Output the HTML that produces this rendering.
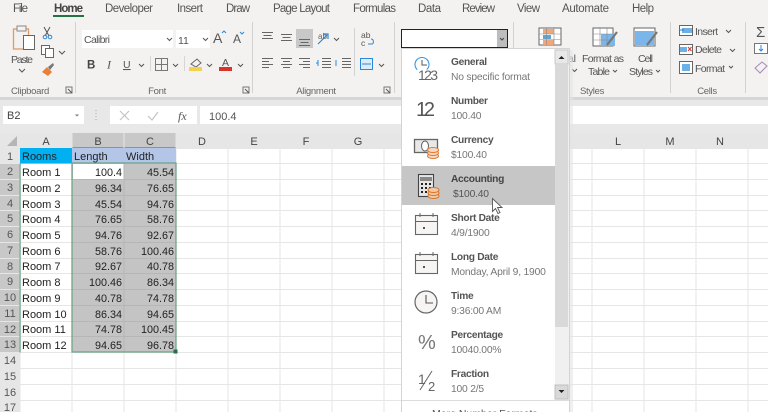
<!DOCTYPE html>
<html><head><meta charset="utf-8"><title>Excel number format</title>
<style>
html,body{margin:0;padding:0;background:#fff;width:768px;height:412px;overflow:hidden}
svg{display:block;filter:blur(.35px)}
text{font-family:"Liberation Sans",sans-serif;white-space:pre}
.tab{font-size:11.5px;fill:#555}
.rb{font-size:10.5px;fill:#555}
.gl{font-size:9.5px;fill:#666;text-anchor:middle;letter-spacing:-.3px}
.ch{font-size:11px;fill:#444;text-anchor:middle}
.rh{font-size:11px;fill:#555;text-anchor:middle}
.c{font-size:11px;fill:#222}
.n{font-size:10.8px;fill:#222;text-anchor:end}
.ti{font-size:10.2px;font-weight:bold;fill:#555;letter-spacing:-.3px}
.su{font-size:10.3px;fill:#777;letter-spacing:-.2px}
.ln{stroke:#666;fill:none}
.chev{fill:none;stroke:#555;stroke-width:1}
</style></head><body>
<svg width="768" height="412" viewBox="0 0 768 412" xmlns="http://www.w3.org/2000/svg">
<!-- ribbon -->
<rect width="768" height="97" fill="#f3f2f1"/>
<rect y="97" width="768" height="3" fill="#d6d6d6"/>
<rect y="100" width="768" height="33" fill="#e8e8e8"/>
<!-- tabs -->
<text class="tab" x="13" y="12" textLength="15">File</text>
<text class="tab" x="54" y="12" textLength="29" style="font-weight:bold;fill:#444">Home</text>
<rect x="53" y="15" width="31" height="2" fill="#217346"/>
<text class="tab" x="105" y="12" textLength="48">Developer</text>
<text class="tab" x="177" y="12" textLength="26">Insert</text>
<text class="tab" x="226" y="12" textLength="24">Draw</text>
<text class="tab" x="273" y="12" textLength="57">Page Layout</text>
<text class="tab" x="353" y="12" textLength="43">Formulas</text>
<text class="tab" x="418" y="12" textLength="23">Data</text>
<text class="tab" x="462" y="12" textLength="33">Review</text>
<text class="tab" x="517" y="12" textLength="23">View</text>
<text class="tab" x="562" y="12" textLength="47">Automate</text>
<text class="tab" x="632" y="12" textLength="22">Help</text>
<!-- separators -->
<g fill="#d2d2d2">
<rect x="75" y="22" width="1" height="71"/><rect x="252" y="22" width="1" height="71"/>
<rect x="354" y="28" width="1" height="48"/><rect x="394" y="22" width="1" height="71"/>
<rect x="513" y="22" width="1" height="71"/><rect x="670" y="22" width="1" height="71"/>
<rect x="745" y="22" width="1" height="71"/>
</g>
<!-- clipboard -->
<rect x="13.500" y="29" width="15" height="20" fill="none" stroke="#e39a5f" stroke-width="1.300"/>
<rect x="17" y="26" width="9" height="5" fill="#f3f2f1" stroke="#888"/>
<rect x="23.500" y="35.500" width="11" height="14" fill="#fff" stroke="#666"/>
<text class="rb" x="11" y="63" textLength="22">Paste</text>
<path class="chev" d="M19 69l3 3 3-3"/>
<path d="M44 27l5 9M50 27l-5 9" stroke="#555" fill="none"/>
<circle cx="45" cy="37" r="1.800" fill="none" stroke="#2b88d8"/><circle cx="50" cy="37" r="1.800" fill="none" stroke="#2b88d8"/>
<rect x="41.500" y="45.500" width="8" height="9" fill="#fff" stroke="#666"/><rect x="45.500" y="48.500" width="8" height="9" fill="#fff" stroke="#666"/>
<path class="chev" d="M59 51l3 3 3-3"/>
<path d="M42 72l5-5 5 5-4 4z" fill="#e8803a"/><path d="M48 67l5-4 1 2-4 5z" fill="#777"/>
<text class="gl" x="30" y="94">Clipboard</text>
<rect x="66" y="87" width="6" height="6" fill="none" stroke="#777"/><path d="M68 89l4 4" stroke="#555"/>
<!-- font -->
<rect x="82" y="30" width="91" height="18" fill="#fff"/>
<text x="84" y="43" textLength="26" style="font-size:10.5px;fill:#555">Calibri</text>
<path class="chev" d="M167 38l2.500 2.500 2.500-2.500"/>
<rect x="176" y="30" width="34" height="18" fill="#fff"/>
<text x="178" y="44" style="font-size:10.5px;fill:#555">11</text>
<path class="chev" d="M203 38l2.500 2.500 2.500-2.500"/>
<text x="213" y="43" style="font-size:14px;fill:#555">A</text><path d="M222 33l2-2 2 2" stroke="#2b88d8" fill="none"/>
<text x="233" y="43" style="font-size:12px;fill:#555">A</text><path d="M240 32l2 2 2-2" stroke="#2b88d8" fill="none"/>
<text x="87" y="68.500" style="font-size:11.5px;font-weight:bold;fill:#444">B</text>
<text x="107" y="68.500" style="font-size:12px;font-style:italic;font-family:'Liberation Serif',serif;fill:#555">I</text>
<text x="123" y="68" style="font-size:10.5px;fill:#555;text-decoration:underline">U</text>
<path class="chev" d="M139 64l2.500 2.500 2.500-2.500"/>
<rect x="150" y="56" width="1" height="15" fill="#d5d5d5"/>
<path d="M155.500 58.500h12v12h-12zM161.500 58.500v12M155.500 64.500h12" fill="none" stroke="#777"/>
<path class="chev" d="M173 64l2.500 2.500 2.500-2.500"/>
<rect x="184" y="56" width="1" height="15" fill="#d5d5d5"/>
<path d="M191 64l6-5 4 4-5 4z" fill="none" stroke="#666"/><rect x="189" y="67" width="13" height="4" fill="#f3d250"/>
<path class="chev" d="M207 64l2.500 2.500 2.500-2.500"/>
<text x="222" y="66" style="font-size:10.5px;fill:#555">A</text><rect x="219" y="67" width="13" height="4" fill="#d9342b"/>
<path class="chev" d="M238 64l2.500 2.500 2.500-2.500"/>
<text class="gl" x="157" y="94">Font</text>
<rect x="243" y="87" width="6" height="6" fill="none" stroke="#777"/><path d="M245 89l4 4" stroke="#555"/>
<!-- alignment -->
<rect x="296" y="29" width="17" height="19" fill="#c8c8c8"/>
<g stroke="#666" fill="none">
<path d="M262 32.500h11M263.500 35.500h8M262 38.500h11M281 34.500h11M282.500 37.500h8M281 40.500h11M299 39.500h11M300.500 42.500h8M299 45.500h11"/>
<path d="M262 58.500h11M262 61.500h7M262 64.500h11M262 67.500h7M281 58.500h11M283 61.500h7M281 64.500h11M283 67.500h7M299 58.500h11M303 61.500h7M299 64.500h11M303 67.500h7M322 58.500h9M322 61.500h9M322 64.500h9M322 67.500h9M342 58.500h9M342 61.500h9M342 64.500h9M342 67.500h9"/>
</g>
<path d="M318 60v6M318 63h-2M336 60v6" stroke="#2b88d8" fill="none"/>
<path d="M318 44l9-9M323 34h5v5" stroke="#2b88d8" fill="none" stroke-width="1.200"/>
<text x="318" y="39" style="font-size:8px;fill:#666">ab</text>
<path class="chev" d="M334 38l2.500 2.500 2.500-2.500"/>
<text x="361" y="38" style="font-size:8.500px;fill:#555">ab</text><text x="361" y="46" style="font-size:8.500px;fill:#555">c</text>
<path d="M368 44h4c2 0 2-5-1-5" stroke="#2b88d8" fill="none"/>
<rect x="360.500" y="58.500" width="12" height="11" fill="#dcecf8" stroke="#2b88d8"/><path d="M362 64h9" stroke="#2b88d8"/>
<path class="chev" d="M379 64l2.500 2.500 2.500-2.500"/>
<text class="gl" x="316" y="94">Alignment</text>
<rect x="384" y="87" width="6" height="6" fill="none" stroke="#777"/><path d="M386 89l4 4" stroke="#555"/>
<!-- styles -->
<g transform="translate(539,28)">
<rect x="0" y="0" width="22" height="17" fill="#fff" stroke="#666"/>
<rect x="4" y="1" width="11" height="5" fill="#f0a878"/><rect x="4" y="7" width="8" height="4" fill="#5ba6e0"/><rect x="4" y="12" width="11" height="5" fill="#f0a878"/>
<path d="M0 6h22M0 11.500h22M7.500 0v17M15 0v17" stroke="#888" fill="none" stroke-width=".6"/>
</g>
<g transform="translate(593,28)">
<rect x="0" y="0" width="20" height="18" fill="#fff" stroke="#666"/><rect x="8" y="6" width="14" height="12" fill="#7ab6ea"/>
<path d="M0 6h20M0 12h20M7 0v18M14 0v18" stroke="#888" fill="none" stroke-width=".6"/>
<path d="M14 17l10-13" stroke="#777" stroke-width="2.200"/>
</g>
<g transform="translate(634,28)">
<rect x="0" y="0" width="21" height="18" fill="#fff" stroke="#666"/><rect x="1" y="3" width="19" height="14" fill="#7ab6ea"/>
<path d="M13 17l10-13" stroke="#777" stroke-width="2.200"/>
</g>
<text class="rb" x="568" y="62" textLength="8">al</text>
<text class="rb" x="582" y="62" textLength="42">Format as</text>
<text class="rb" x="588" y="75" textLength="22">Table</text><path class="chev" d="M613 70l2 2 2-2"/>
<text class="rb" x="638" y="62" textLength="15">Cell</text>
<text class="rb" x="629" y="75" textLength="24">Styles</text><path class="chev" d="M656 70l2 2 2-2"/>
<path class="chev" d="M572 69l2.500 2.500 2.500-2.500"/>
<text class="gl" x="592" y="94">Styles</text>
<!-- cells -->
<g transform="translate(679,25)">
<rect x=".5" y=".5" width="13" height="10" fill="#fff" stroke="#666"/><rect x="3" y="3" width="10" height="5" fill="#6cb0e6"/>
<path d="M0 5h5" stroke="#2b78c8"/>
</g>
<text class="rb" x="695" y="35" textLength="23">Insert</text><path class="chev" d="M726 30l2.500 2.500 2.500-2.500"/>
<g transform="translate(679,44)">
<rect x=".5" y=".5" width="13" height="10" fill="#fff" stroke="#666"/><rect x="1" y="3" width="7" height="5" fill="#6cb0e6"/>
<path d="M9 3l3.500 4M12.500 3l-3.500 4" stroke="#d9342b"/>
</g>
<text class="rb" x="695" y="53" textLength="27">Delete</text><path class="chev" d="M730 49l2.500 2.500 2.500-2.500"/>
<g transform="translate(679,61)">
<rect x=".5" y=".5" width="13" height="12" fill="#fff" stroke="#666"/><rect x="3" y="3" width="8" height="7" fill="#6cb0e6"/>
</g>
<text class="rb" x="695" y="72" textLength="30">Format</text><path class="chev" d="M729 66l2 2 2-2"/>
<text class="gl" x="707" y="94">Cells</text>
<!-- editing -->
<text x="756" y="37" style="font-size:15px;fill:#555">Σ</text>
<rect x="754.500" y="43.500" width="13" height="10" fill="#fff" stroke="#777"/><path d="M761 45v6M759 49l2 2 2-2" stroke="#2b88d8" fill="none"/>
<path d="M755 68l7-6 5 4-7 7z" fill="#f3f2f1" stroke="#a788b8"/>
<!-- formula bar -->
<rect x="3" y="106" width="81" height="18" fill="#fff"/>
<text x="7" y="119" style="font-size:11px;fill:#444">B2</text>
<path d="M75 114.500h4l-2 2z" fill="#777"/>
<path d="M96 110v1M96 113v1M96 116v1M96 119v1" stroke="#aaa"/>
<rect x="110" y="106" width="87" height="18" fill="#fff"/>
<path d="M120 111l9 9M129 111l-9 9" stroke="#c4c4c4" stroke-width="1.200" fill="none"/>
<path d="M148 116l4 4 6-8" stroke="#c4c4c4" stroke-width="1.200" fill="none"/>
<text x="178" y="120" style="font-family:'Liberation Serif',serif;font-style:italic;font-size:12px;fill:#555">fx</text>
<rect x="200" y="106" width="568" height="18" fill="#fff"/>
<text x="209" y="120" style="font-size:11px;fill:#555">100.4</text>
<!-- grid -->
<rect y="133" width="768" height="279" fill="#fff"/>
<rect y="133" width="768" height="15" fill="#e6e6e6"/>
<rect y="148" width="20" height="264" fill="#e6e6e6"/>
<path d="M17 136v10h-10z" fill="#b5b5b5"/>
<rect x="72" y="133" width="104" height="15" fill="#c8c8c8"/>
<rect x="72" y="147" width="104" height="1.500" fill="#6fa58a"/>
<rect y="163.500" width="20" height="189" fill="#c8c8c8"/>
<g stroke="#e6e6e6" fill="none">
<path d="M72 133v279M124 133v279M176 133v279M228 133v279M280 133v279M332 133v279M384 133v279M592 133v279M644 133v279M696 133v279M748 133v279M20 133v279"/>
<path d="M0 163.500h768M0 179.500h768M0 195.500h768M0 210.500h768M0 226.500h768M0 242.500h768M0 258.500h768M0 273.500h768M0 289.500h768M0 305.500h768M0 321.500h768M0 336.500h768M0 352.500h768M0 368.500h768M0 384.500h768M0 400.500h768M0 148.500h768"/>
</g>
<text class="ch" x="46" y="145">A</text><text class="ch" x="98" y="145">B</text><text class="ch" x="150" y="145">C</text><text class="ch" x="202" y="145">D</text><text class="ch" x="254" y="145">E</text><text class="ch" x="306" y="145">F</text><text class="ch" x="358" y="145">G</text><text class="ch" x="618" y="145">L</text><text class="ch" x="670" y="145">M</text><text class="ch" x="720" y="145">N</text>
<rect x="20" y="148" width="52" height="15.500" fill="#00b0f0"/>
<rect x="72" y="148" width="104" height="15.500" fill="#b4c6e7"/>
<rect x="72" y="163.500" width="104" height="189" fill="#c4c4c4"/>
<rect x="73" y="164" width="51" height="15" fill="#fff"/>
<path d="M72 179.500h104M72 195.500h104M72 210.500h104M72 226.500h104M72 242.500h104M72 258.500h104M72 273.500h104M72 289.500h104M72 305.500h104M72 321.500h104M72 336.500h104M124 163v189" stroke="#b6b6b6" fill="none"/>
<rect x="72" y="163" width="104" height="189" fill="none" stroke="#6fa58a" stroke-width="1.300"/>
<rect x="19.500" y="163.500" width="1.200" height="189" fill="#6fa58a"/>
<rect x="173.500" y="349.500" width="4" height="4" fill="#217346"/>
<g class="rows">
<text class="rh" x="10" y="160">1</text><text class="rh" x="10" y="175">2</text><text class="rh" x="10" y="191">3</text><text class="rh" x="10" y="207">4</text><text class="rh" x="10" y="222">5</text><text class="rh" x="10" y="238">6</text><text class="rh" x="10" y="254">7</text><text class="rh" x="10" y="270">8</text><text class="rh" x="10" y="285">9</text><text class="rh" x="10" y="301">10</text><text class="rh" x="10" y="317">11</text><text class="rh" x="10" y="333">12</text><text class="rh" x="10" y="348">13</text><text class="rh" x="10" y="364">14</text><text class="rh" x="10" y="380">15</text><text class="rh" x="10" y="396">16</text><text class="rh" x="10" y="411">17</text>
</g>
<text class="c" x="22" y="160">Rooms</text><text class="c" x="74" y="160">Length</text><text class="c" x="126" y="160">Width</text>
<text class="c" x="22" y="176">Room 1</text><text class="n" x="122" y="176">100.4</text><text class="n" x="174" y="176">45.54</text>
<text class="c" x="22" y="192">Room 2</text><text class="n" x="122" y="192">96.34</text><text class="n" x="174" y="192">76.65</text>
<text class="c" x="22" y="208">Room 3</text><text class="n" x="122" y="208">45.54</text><text class="n" x="174" y="208">94.76</text>
<text class="c" x="22" y="223">Room 4</text><text class="n" x="122" y="223">76.65</text><text class="n" x="174" y="223">58.76</text>
<text class="c" x="22" y="239">Room 5</text><text class="n" x="122" y="239">94.76</text><text class="n" x="174" y="239">92.67</text>
<text class="c" x="22" y="255">Room 6</text><text class="n" x="122" y="255">58.76</text><text class="n" x="174" y="255">100.46</text>
<text class="c" x="22" y="270">Room 7</text><text class="n" x="122" y="270">92.67</text><text class="n" x="174" y="270">40.78</text>
<text class="c" x="22" y="286">Room 8</text><text class="n" x="122" y="286">100.46</text><text class="n" x="174" y="286">86.34</text>
<text class="c" x="22" y="302">Room 9</text><text class="n" x="122" y="302">40.78</text><text class="n" x="174" y="302">74.78</text>
<text class="c" x="22" y="318">Room 10</text><text class="n" x="122" y="318">86.34</text><text class="n" x="174" y="318">94.65</text>
<text class="c" x="22" y="333">Room 11</text><text class="n" x="122" y="333">74.78</text><text class="n" x="174" y="333">100.45</text>
<text class="c" x="22" y="349">Room 12</text><text class="n" x="122" y="349">94.65</text><text class="n" x="174" y="349">96.78</text>
<!-- combo -->
<rect x="401.500" y="29.500" width="106" height="18" fill="#fff" stroke="#222"/>
<rect x="497" y="30" width="10" height="17" fill="#bdbdbd"/>
<path d="M500 38l2 2 2-2" fill="none" stroke="#444"/>
<!-- dropdown -->
<rect x="570" y="50" width="3" height="362" fill="#e4e4e4" opacity=".6"/>
<rect x="401.500" y="48.500" width="168" height="364" fill="#fff" stroke="#d4d4d4"/>
<rect x="402" y="166" width="153" height="39" fill="#c6c6c6"/>
<rect x="555" y="49" width="14" height="351" fill="#f0f0f0"/>
<rect x="555" y="50" width="13" height="14" fill="#e8e8e8" stroke="#c8c8c8"/>
<path d="M558.500 59h6l-3-3z" fill="#222"/>
<rect x="555" y="64" width="13" height="263" fill="#d9d9d9"/>
<rect x="555" y="385" width="13" height="14" fill="#d9d9d9" stroke="#c0c0c0"/>
<path d="M558.500 390h6l-3 3z" fill="#222"/>
<rect x="402" y="400" width="167" height="1" fill="#dcdcdc"/>
<text x="432" y="417" style="font-size:10.5px;fill:#555">More Number Formats...</text>
<!-- icons -->
<circle cx="422" cy="64.500" r="7" fill="#fff" stroke="#3c96dd" stroke-width="1.100"/>
<path d="M422 60v5h5" fill="none" stroke="#555"/>
<rect x="417" y="69.500" width="22" height="12" fill="#fff"/>
<text x="418" y="80" textLength="20" style="font-size:14px;fill:#666">123</text>
<text x="416" y="116" textLength="19" style="font-size:20px;fill:#555">12</text>
<rect x="414.500" y="139.500" width="23" height="13" fill="#e8e8e8" stroke="#666" stroke-width="1.300"/>
<ellipse cx="425" cy="146" rx="3.500" ry="5" fill="#fff" stroke="#666"/>
<g fill="#f5d9c3" stroke="#e07a33">
<ellipse cx="433" cy="156" rx="5.500" ry="2.500"/><ellipse cx="433" cy="153" rx="5.500" ry="2.500"/><ellipse cx="433" cy="150" rx="5.500" ry="2.500"/>
</g>
<rect x="418.500" y="174.500" width="15" height="22" fill="#e6e6e6" stroke="#444" stroke-width="1.100"/>
<rect x="420" y="177" width="12" height="4" fill="#888"/>
<path d="M421 184h2M425 184h2M429 184h2M421 188h2M425 188h2M429 188h2M421 192h2M425 192h2" stroke="#222" stroke-width="2"/>
<g fill="#f2c9a5" stroke="#d8752e">
<ellipse cx="433.500" cy="196" rx="5.500" ry="2.500"/><ellipse cx="433.500" cy="193" rx="5.500" ry="2.500"/><ellipse cx="433.500" cy="190" rx="5.500" ry="2.500"/>
</g>
<g fill="#f6f5f4" stroke="#666" stroke-width="1.100">
<rect x="415.500" y="215.500" width="22" height="19"/><rect x="415.500" y="254.500" width="22" height="19"/>
</g>
<path d="M415 221.500h22M420 213v4M433 213v4M415 260.500h22M420 252v4M433 252v4" stroke="#666" fill="none"/>
<rect x="423" y="227" width="2" height="2" fill="#555"/><rect x="423" y="266" width="2" height="2" fill="#555"/>
<circle cx="426" cy="302" r="11" fill="#f6f5f4" stroke="#666" stroke-width="1.200"/>
<path d="M426 295v8h7" fill="none" stroke="#555" stroke-width="1.100"/>
<text x="418" y="349" textLength="17" style="font-size:20px;fill:#777">%</text>
<text x="418" y="384" style="font-size:14px;fill:#666">1</text>
<path d="M420 390l12-19" stroke="#666" fill="none"/>
<text x="428" y="391" style="font-size:13px;fill:#666">2</text>
<!-- list text -->
<text class="ti" x="451" y="65">General</text><text class="su" x="451" y="80">No specific format</text>
<text class="ti" x="451" y="104">Number</text><text class="su" x="451" y="119">100.40</text>
<text class="ti" x="451" y="143">Currency</text><text class="su" x="451" y="158">$100.40</text>
<text class="ti" x="451" y="182" style="fill:#444">Accounting</text><text class="su" x="453" y="197" style="fill:#555">$100.40</text>
<text class="ti" x="451" y="221">Short Date</text><text class="su" x="451" y="236">4/9/1900</text>
<text class="ti" x="451" y="260">Long Date</text><text class="su" x="451" y="275">Monday, April 9, 1900</text>
<text class="ti" x="451" y="299">Time</text><text class="su" x="451" y="314">9:36:00 AM</text>
<text class="ti" x="451" y="338">Percentage</text><text class="su" x="451" y="353">10040.00%</text>
<text class="ti" x="451" y="377">Fraction</text><text class="su" x="451" y="392">100 2/5</text>
<!-- cursor -->
<path d="M492.500 198.500v13l3-3 2.500 5 2-1-2.500-5h4.500z" fill="#fff" stroke="#555" stroke-width=".9"/>
</svg>
</body></html>
